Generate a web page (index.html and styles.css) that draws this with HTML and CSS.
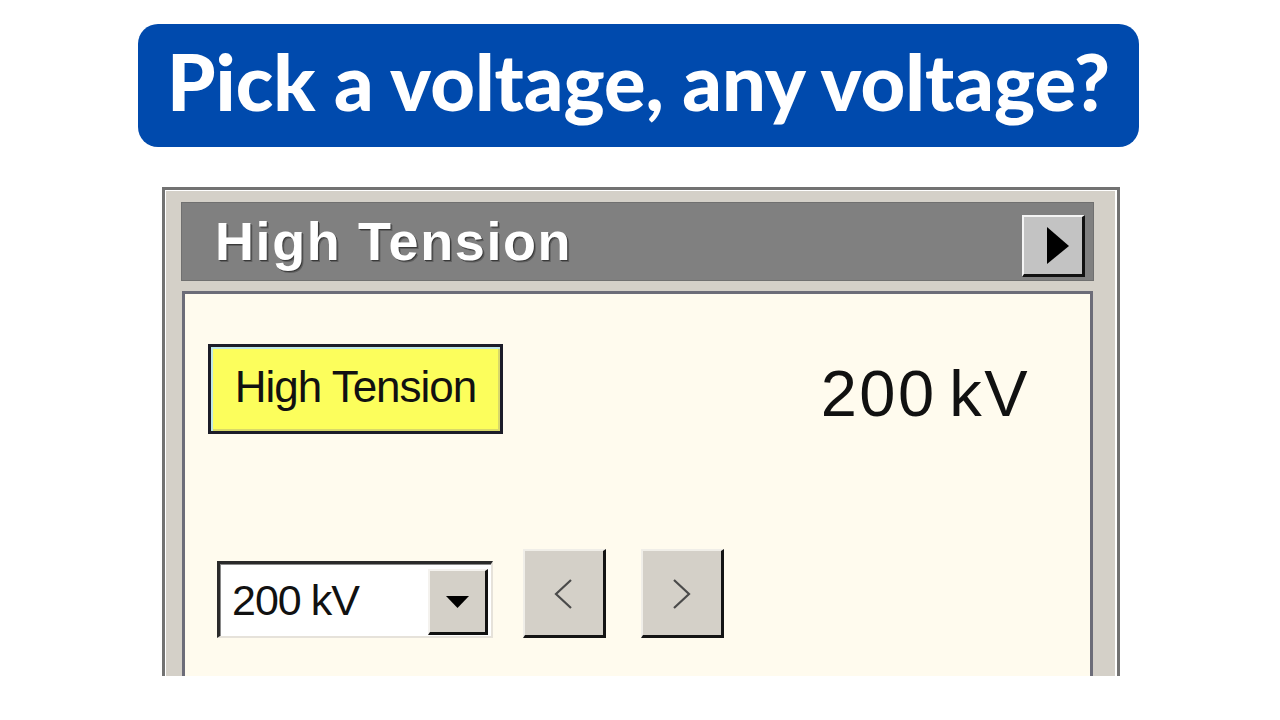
FILE: index.html
```html
<!DOCTYPE html>
<html>
<head>
<meta charset="utf-8">
<link rel="stylesheet" href="styles.css">
</head>
<body>
<div class="page">
  <div class="banner"><span class="banner-text">Pick a voltage, any voltage?</span></div>
  <div class="frame">
    <div class="titlebar">
      <span class="title">High Tension</span>
      <div class="title-btn">
        <svg width="58" height="57" viewBox="0 0 58 57"><polygon points="23,10 45,29 23,47" fill="#000"/></svg>
      </div>
    </div>
    <div class="content">
      <div class="row1">
        <div class="ht-btn"><span>High Tension</span></div>
        <div class="readout">200 kV</div>
      </div>
      <div class="row2">
        <div class="combo">
          <span class="combo-text">200 kV</span>
          <div class="combo-btn">
            <svg width="55" height="61" viewBox="0 0 55 61"><polygon points="16,25 39,25 27.5,37" fill="#000"/></svg>
          </div>
        </div>
        <div class="step-btn">
          <svg width="78" height="84" viewBox="0 0 78 84"><polyline points="46,29 31,43 46,57" fill="none" stroke="#4a4a4a" stroke-width="2.2"/></svg>
        </div>
        <div class="step-btn">
          <svg width="78" height="84" viewBox="0 0 78 84"><polyline points="31,29 46,43 31,57" fill="none" stroke="#4a4a4a" stroke-width="2.2"/></svg>
        </div>
      </div>
    </div>
  </div>
</div>
</body>
</html>
```

FILE: styles.css
```css
html, body {
  margin: 0;
  padding: 0;
  background: #ffffff;
}
.page {
  width: 1280px;
  height: 720px;
  overflow: hidden;
  position: relative;
  padding-top: 24px;
  box-sizing: border-box;
}
.banner {
  margin-left: 138px;
  width: 1001px;
  height: 123px;
  background: #004aad;
  border-radius: 20px;
  display: flex;
  align-items: center;
  justify-content: center;
}
.banner-text {
  font-family: "Lato", "DejaVu Sans", sans-serif;
  font-weight: 900;
  font-size: 77.5px;
  letter-spacing: 0;
  color: #ffffff;
  line-height: 1;
  margin-top: -8px;
}
.frame {
  margin-top: 40px;
  margin-left: 162px;
  width: 958px;
  height: 489px;
  box-sizing: border-box;
  border: 3px solid #727272;
  border-bottom: none;
  background: #d4d0c8;
  box-shadow: inset 1px 1px 0 #ffffff, inset -2px 0 0 #ffffff;
  padding: 12px 23px 0 16px;
  display: flex;
  flex-direction: column;
  gap: 10px;
  overflow: hidden;
}
.titlebar {
  height: 79px;
  flex: none;
  box-sizing: border-box;
  background: #808080;
  border: 1px solid #707070;
  display: flex;
  align-items: center;
  justify-content: space-between;
  padding: 0 8px 0 33px;
}
.title {
  font-family: "Liberation Sans", Arial, sans-serif;
  font-weight: bold;
  font-size: 54px;
  letter-spacing: 1.6px;
  color: #ffffff;
  text-shadow: 1px 1px 0 #3a3a3a, 2px 2px 0 #606060;
  line-height: 1;
  margin-top: -2px;
}
.title-btn {
  width: 63px;
  height: 62px;
  box-sizing: border-box;
  background: #c3c3c3;
  border-top: 2px solid #f4f4f4;
  border-left: 2px solid #f4f4f4;
  border-right: 3px solid #111111;
  border-bottom: 3px solid #111111;
  margin-top: 8px;
  display: flex;
}
.content {
  flex: 1;
  background: #fffbee;
  border-top: 3px solid #6c6c78;
  border-left: 3px solid #6c6c78;
  border-right: 3px solid #6c6c78;
  margin-left: 1px;
  margin-right: 1px;
  padding: 50px 60px 0 23px;
}
.row1 {
  display: flex;
  justify-content: space-between;
  align-items: flex-start;
}
.ht-btn {
  width: 295px;
  height: 90px;
  box-sizing: border-box;
  border: 3px solid #1c1c28;
  background: #fcfe5c;
  box-shadow: inset 2px 2px 0 #bfe8e8, inset -2px -2px 0 #d8d868;
  display: flex;
  align-items: center;
  justify-content: center;
}
.ht-btn span {
  font-family: "Liberation Sans", Arial, sans-serif;
  font-size: 44px;
  letter-spacing: -1px;
  color: #111111;
  line-height: 1;
  margin-top: -4px;
}
.readout {
  font-family: "Liberation Sans", Arial, sans-serif;
  font-size: 65px;
  letter-spacing: 2.5px;
  word-spacing: -8px;
  color: #111111;
  line-height: 1;
  margin-top: 17px;
}
.row2 {
  display: flex;
  align-items: flex-start;
  margin-top: 115px;
  margin-left: 9px;
}
.combo {
  width: 276px;
  height: 77px;
  box-sizing: border-box;
  margin-top: 12px;
  background: #ffffff;
  border-top: 3px solid #2a2a2a;
  border-left: 3px solid #2a2a2a;
  border-right: 2px solid #e6e2da;
  border-bottom: 2px solid #e6e2da;
  box-shadow: inset 1px 1px 0 #8a8a8a;
  display: flex;
  align-items: center;
  justify-content: space-between;
  padding: 4px 3px 4px 12px;
}
.combo-text {
  font-family: "Liberation Sans", Arial, sans-serif;
  font-size: 43px;
  letter-spacing: -1px;
  word-spacing: -1px;
  color: #111111;
  line-height: 1;
}
.combo-btn {
  width: 60px;
  height: 66px;
  box-sizing: border-box;
  background: #d4d0c8;
  border-top: 2px solid #f4f2ee;
  border-left: 2px solid #f4f2ee;
  border-right: 3px solid #111111;
  border-bottom: 3px solid #111111;
  display: flex;
  margin-top: 3px;
}
.step-btn {
  width: 83px;
  height: 89px;
  box-sizing: border-box;
  background: #d4d0c8;
  border-top: 2px solid #f0eee8;
  border-left: 2px solid #f0eee8;
  border-right: 3px solid #141414;
  border-bottom: 3px solid #141414;
  margin-left: 30px;
  display: flex;
}
.step-btn + .step-btn {
  margin-left: 35px;
}
```
